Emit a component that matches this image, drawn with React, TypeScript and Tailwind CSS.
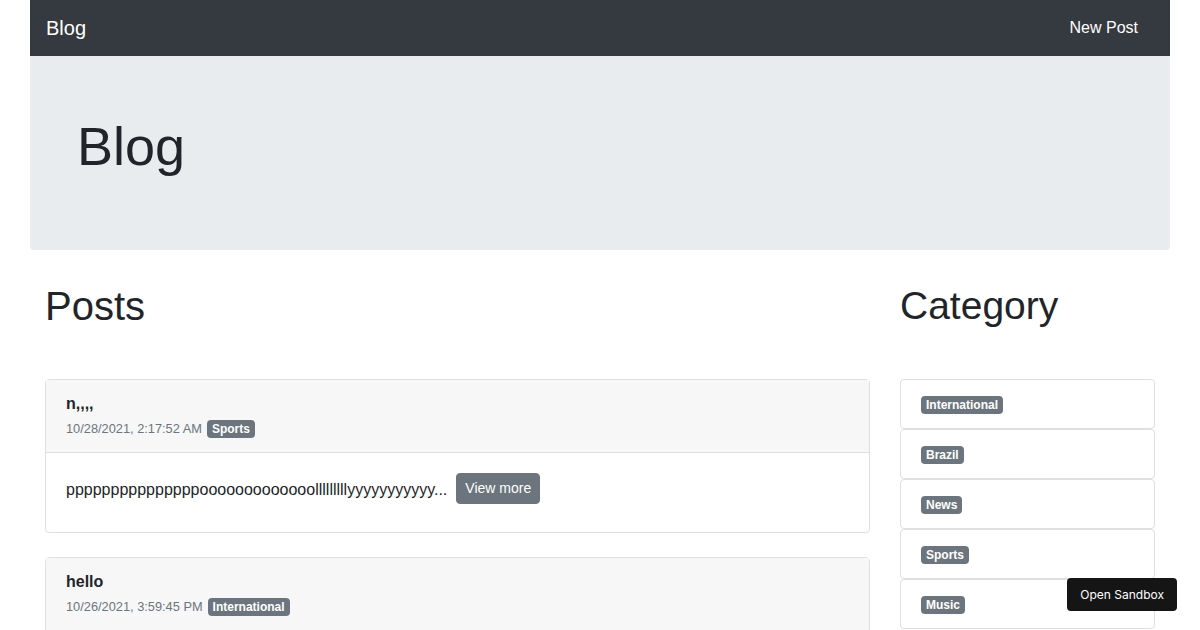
import React from "react";

type Post = {
  title: string;
  date: string;
  category: string;
  excerpt: string;
};

const posts: Post[] = [
  {
    title: "n,,,,",
    date: "10/28/2021, 2:17:52 AM",
    category: "Sports",
    excerpt: "ppppppppppppppp" + "ooooooooooooo" + "lllllllll" + "yyyyyyyyyyy" + "...",
  },
  {
    title: "hello",
    date: "10/26/2021, 3:59:45 PM",
    category: "International",
    excerpt: "hello world...",
  },
];

const categories = ["International", "Brazil", "News", "Sports", "Music"];

function Badge({ label }: { label: string }) {
  return (
    <span className="inline-block rounded-[4px] bg-[#6c757d] px-[5px] py-[3px] text-[12px] font-bold leading-none text-white">
      {label}
    </span>
  );
}

function PostCard({ post }: { post: Post }) {
  return (
    <div className="mb-6 rounded-[4px] border border-[#dfdfdf]">
      <div className="border-b border-[#dfdfdf] bg-[#f7f7f7] px-5 py-3">
        <div className="text-base font-bold leading-6">{post.title}</div>
        <div className="flex h-6 items-center gap-[5px] pt-[2px]">
          <span className="text-[12.8px] text-[#6c757d]">{post.date}</span>
          <Badge label={post.category} />
        </div>
      </div>
      <div className="flex h-[79px] items-start px-5 pt-5">
        <span className="mt-[5px] text-base leading-6">{post.excerpt}</span>
        <button className="ml-[9px] rounded-[4px] border border-[#6c757d] bg-[#6c757d] px-2 py-1 text-sm leading-[21px] text-white">
          View more
        </button>
      </div>
    </div>
  );
}

export default function App() {
  return (
    <div className="relative min-h-screen bg-white font-['Liberation_Sans',Arial,sans-serif] text-[#212529]">
      <div className="mx-auto w-[1140px]">
        <nav className="flex h-14 items-center justify-between bg-[#343a40] px-4">
          <span className="text-xl text-white">Blog</span>
          <span className="px-2 pr-4 text-base text-white">New Post</span>
        </nav>

        <div className="h-[194px] rounded-b-[4px] bg-[#e9ecef] pl-[47px] pt-[58px]">
          <h1 className="text-[54px] font-light leading-[1.2]">Blog</h1>
        </div>

        <div className="mt-8 flex">
          <div className="w-[855px] px-[15px]">
            <h1 className="mb-[49px] text-[40px] leading-[48px]">Posts</h1>
            {posts.map((post) => (
              <PostCard key={post.title} post={post} />
            ))}
          </div>

          <div className="w-[285px] px-[15px]">
            <h1 className="mb-[49px] text-[39px] leading-[48px]">Category</h1>
            <ul>
              {categories.map((c) => (
                <li
                  key={c}
                  className="flex h-[50px] items-center rounded-[4px] border border-[#dfdfdf] px-5 pt-[2px]"
                >
                  <Badge label={c} />
                </li>
              ))}
            </ul>
          </div>
        </div>
      </div>

      <button className="fixed bottom-[19px] right-[23px] h-[33px] rounded-[4px] bg-[#151515] px-[13px] font-['Inter',sans-serif] text-[12px] text-white">
        Open Sandbox
      </button>
    </div>
  );
}
